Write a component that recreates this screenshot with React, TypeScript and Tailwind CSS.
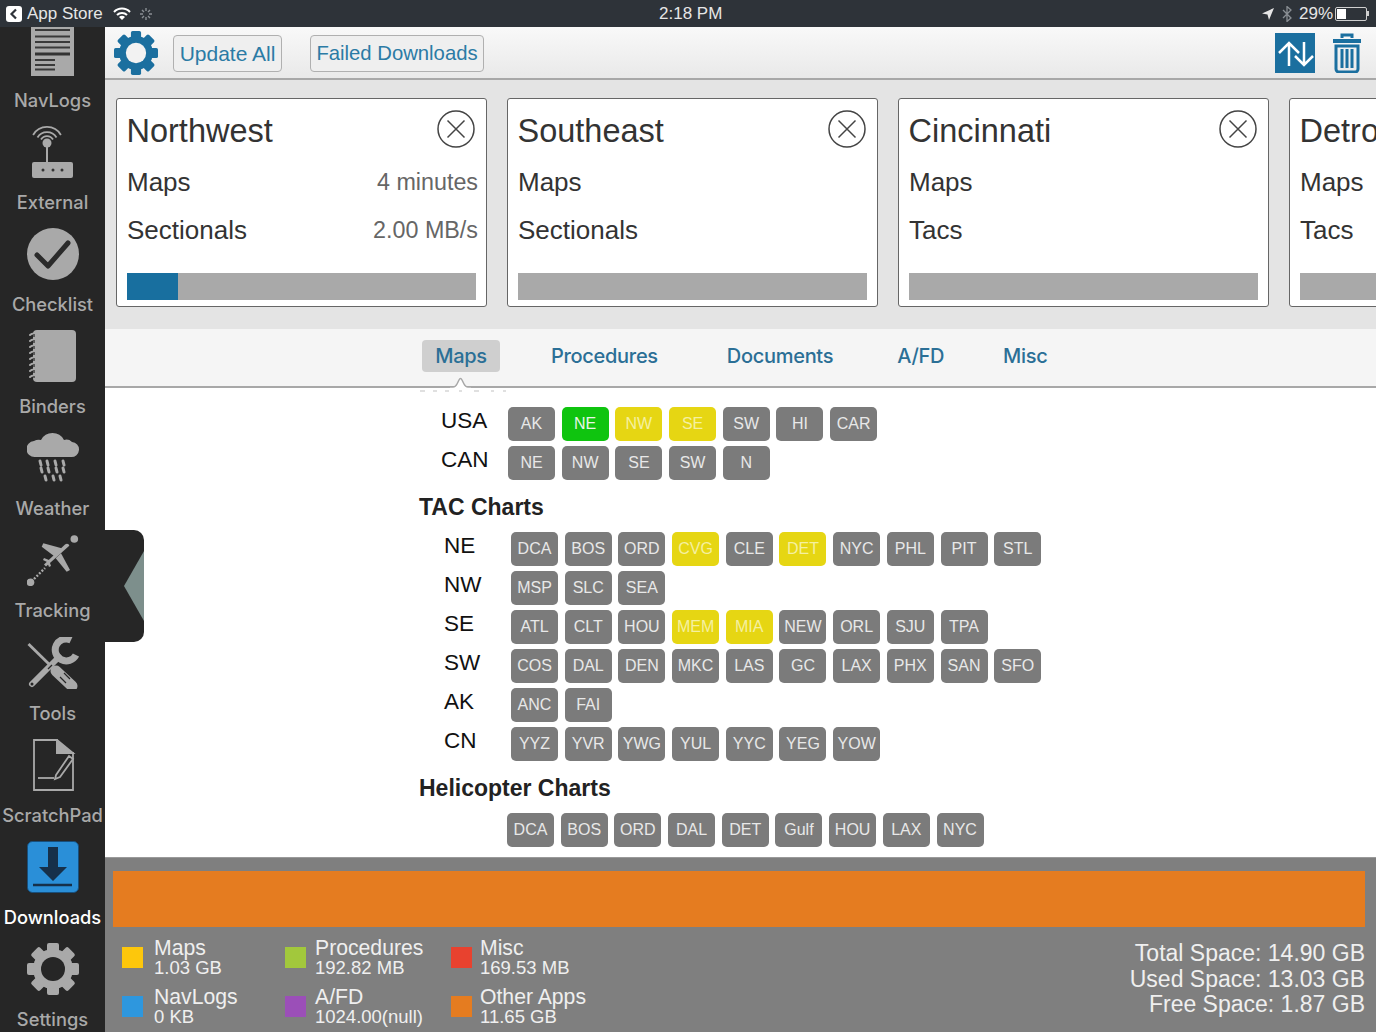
import type { ReactNode } from 'react';

const GREY = '#a9a9a9';
const BLUE = '#1b6f9f';

const navItems: { label: string; icon: ReactNode; active?: boolean }[] = [
  {
    label: 'NavLogs',
    icon: (
      <svg width="52" height="52" viewBox="0 0 52 52">
        <rect x="4" y="0" width="43" height="52" fill={GREY} />
        <path d="M8 6h35M8 12.500h35M8 18h35M8 23.500h35" stroke="#3a3a3a" strokeWidth="2" />
        <path d="M8 30h35" stroke="#333" strokeWidth="3" />
        <path d="M8 36h20M8 41h20M8 45.500h20" stroke="#3a3a3a" strokeWidth="1.800" />
      </svg>
    ),
  },
  {
    label: 'External',
    icon: (
      <svg width="52" height="52" viewBox="0 0 52 52" fill="none" stroke={GREY}>
        <path d="M6.100 9A16 16 0 0 1 33.900 9M10.500 11.500A11 11 0 0 1 29.500 11.500M14 13.500A7 7 0 0 1 26 13.500" strokeWidth="1.800" />
        <circle cx="20" cy="17" r="4.500" fill={GREY} stroke="none" />
        <path d="M20 20v17" strokeWidth="2" />
        <rect x="5" y="36" width="41" height="16" rx="2" fill={GREY} stroke="none" />
        <circle cx="16" cy="44" r="1.500" fill="#333" stroke="none" />
        <circle cx="26" cy="44" r="1.500" fill="#333" stroke="none" />
        <circle cx="35" cy="44" r="1.500" fill="#333" stroke="none" />
      </svg>
    ),
  },
  {
    label: 'Checklist',
    icon: (
      <svg width="52" height="52" viewBox="0 0 52 52" fill="none">
        <circle cx="26" cy="26" r="26" fill={GREY} />
        <path d="M10 27l11 11 20-23" stroke="#2b2b2b" strokeWidth="5" strokeLinecap="round" strokeLinejoin="round" />
      </svg>
    ),
  },
  {
    label: 'Binders',
    icon: (
      <svg width="52" height="52" viewBox="0 0 52 52" fill="none">
        <rect x="6" y="0" width="43" height="52" rx="4" fill={GREY} />
        <path
          d="M3 5c2-2 6-2 8 0M3 11c2-2 6-2 8 0M3 17c2-2 6-2 8 0M3 23c2-2 6-2 8 0M3 29c2-2 6-2 8 0M3 35c2-2 6-2 8 0M3 41c2-2 6-2 8 0M3 47c2-2 6-2 8 0"
          stroke={GREY}
          strokeWidth="2"
          strokeLinecap="round"
        />
        <path d="M7 4v44" stroke="#262626" strokeWidth="1.200" strokeDasharray="3 3" />
      </svg>
    ),
  },
  {
    label: 'Weather',
    icon: (
      <svg width="52" height="52" viewBox="0 0 52 52" fill="none">
        <path d="M8 25a8 8 0 0 1-1-16 9 9 0 0 1 7-1 13 13 0 0 1 23 0 8 8 0 0 1 8 2 7.500 7.500 0 0 1-1 15z" fill={GREY} />
        <path
          d="M13 29l1 4M20 29l1 4M28 29l1 4M36 29l1 4M14 36l1 4M21 36l1 4M29 36l1 4M36 36l1 4M18 44l1 4M26 44l1 4M33 44l1 4"
          stroke={GREY}
          strokeWidth="3"
          strokeLinecap="round"
        />
      </svg>
    ),
  },
  {
    label: 'Tracking',
    icon: (
      <svg width="52" height="52" viewBox="0 0 52 52" fill="none">
        <circle cx="47.300" cy="5" r="3.800" fill={GREY} />
        <circle cx="3.500" cy="48.300" r="3.800" fill={GREY} />
        <path d="M7 45l11-11" stroke={GREY} strokeWidth="2.400" strokeDasharray="2 1.600" />
        <path d="M42.300 11.700L19 32.500l-2-2 21-20c2-1.500 4-.5 4.300 1.200z" fill={GREY} />
        <path d="M34.700 14.300L16.300 9.300l-1.600 3.400L28 22.700z" fill={GREY} />
        <path d="M34 19.300L43 36l-3.300 1.700L28.700 24.300z" fill={GREY} />
        <path d="M16 26l4 2 2 5 2-1-2-6-5-2z" fill={GREY} />
      </svg>
    ),
  },
  {
    label: 'Tools',
    icon: (
      <svg width="52" height="52" viewBox="0 0 52 52" fill="none">
        <path d="M1.500 7L28 33" stroke={GREY} strokeWidth="2.800" />
        <path d="M44 3A11 11 0 1 0 49 18" stroke={GREY} strokeWidth="7" />
        <path d="M32 20L5 47" stroke={GREY} strokeWidth="6" strokeLinecap="round" />
        <circle cx="5" cy="47" r="1.500" fill="#262626" />
        <path d="M29 34l16 15" stroke={GREY} strokeWidth="11" strokeLinecap="round" />
        <path d="M33 40l6 6M37 36l6 6" stroke="#262626" strokeWidth="1.200" />
        <path d="M25 28l-4 4" stroke="#262626" strokeWidth="1.200" />
      </svg>
    ),
  },
  {
    label: 'ScratchPad',
    icon: (
      <svg width="52" height="52" viewBox="0 0 52 52" fill="none" stroke={GREY} strokeWidth="1.800">
        <path d="M7 1h23v13h16v37H7z" />
        <path d="M30 1l16 13H30z" fill={GREY} />
        <path d="M11 39h16" />
        <path d="M29 36l13-19 4 3-13 18-5 2z" />
      </svg>
    ),
  },
  {
    label: 'Downloads',
    active: true,
    icon: (
      <svg width="52" height="52" viewBox="0 0 52 52" fill="none">
        <rect x="0.500" y="0.500" width="51" height="51" rx="5" fill="#2a8fd8" stroke="#184f7c" />
        <path d="M21 6h10v20h9L26 40 12 26h9z" fill="#16304a" />
        <path d="M6 44h39" stroke="#16304a" strokeWidth="2.500" />
      </svg>
    ),
  },
  {
    label: 'Settings',
    icon: <Gear size={52} color={GREY} hole="#262626" />,
  },
];

function Gear({ size, color, hole }: { size: number; color: string; hole: string }) {
  const teeth = [0, 45, 90, 135, 180, 225, 270, 315];
  return (
    <svg width={size} height={size} viewBox="0 0 52 52">
      {teeth.map(a => (
        <rect key={a} x="20" y="0" width="12" height="14" rx="2" fill={color} transform={`rotate(${a} 26 26)`} />
      ))}
      <circle cx="26" cy="26" r="20" fill={color} />
      <circle cx="26" cy="26" r="12" fill={hole} />
    </svg>
  );
}

function Sidebar() {
  return (
    <div className="w-[105px] shrink-0 -mt-[5px] bg-[#262626] flex flex-col overflow-hidden">
      {navItems.map(item => (
        <div key={item.label} className="h-[102.100px] shrink-0 flex flex-col items-center pt-[2px]">
          {item.icon}
          <span
            className={`mt-[13px] text-[18.300px] leading-[23px] font-medium whitespace-nowrap font-['Inter',sans-serif] ${
              item.active ? 'text-white' : 'text-[#a9a9a9]'
            }`}
          >
            {item.label}
          </span>
        </div>
      ))}
    </div>
  );
}

function StatusBar() {
  return (
    <div className="h-[27px] shrink-0 relative z-10 bg-[#2e3339] text-[#e6e6e6] text-[17px] flex items-center pl-[6px] pr-[7px]">
      <span className="w-[16px] h-[16px] rounded-[3px] bg-white flex items-center justify-center">
        <svg width="10" height="12" viewBox="0 0 10 12" fill="none">
          <path d="M7 1.500L2.500 6 7 10.500" stroke="#2e3339" strokeWidth="2.200" />
        </svg>
      </span>
      <span className="ml-[5px]">App Store</span>
      <svg className="ml-[10px]" width="18" height="14" viewBox="0 0 18 14" fill="none" stroke="#fff" strokeWidth="2">
        <path d="M1 5a11 11 0 0 1 16 0M4 8a7 7 0 0 1 10 0" />
        <path d="M9 13l-3-3a4 4 0 0 1 6 0z" fill="#fff" stroke="none" />
      </svg>
      <svg className="ml-[8px]" width="14" height="14" viewBox="0 0 14 14" stroke="#8a8f94" strokeWidth="1.400">
        <path d="M7 1v3M7 10v3M1 7h3M10 7h3M3 3l2 2M9 9l2 2M3 11l2-2M9 5l2-2" />
      </svg>
      <span className="absolute left-[659px]">2:18 PM</span>
      <div className="ml-auto flex items-center">
        <svg width="12" height="12" viewBox="0 0 12 12">
          <path d="M12 0L0 5.500l5.500 1L7 12z" fill="#e6e6e6" />
        </svg>
        <svg className="ml-[8px]" width="10" height="16" viewBox="0 0 10 16" fill="none" stroke="#8a8f94" strokeWidth="1.300">
          <path d="M1 4l8 8-4 3.500V.5l4 3.500-8 8" />
        </svg>
        <span className="ml-[7px]">29%</span>
        <span className="ml-[2px] w-[32px] h-[14px] border border-[#cfcfcf] rounded-[2px] p-[1px] flex">
          <span className="w-[9px] bg-white" />
        </span>
        <span className="w-[2px] h-[5px] bg-[#cfcfcf]" />
      </div>
    </div>
  );
}

function Toolbar() {
  const btn =
    'h-[37px] mt-[2px] border border-[#b0b0b0] rounded-[4px] bg-[#efefef] text-[#2b7ba5] flex items-center justify-center whitespace-nowrap';
  return (
    <div className="h-[53px] shrink-0 bg-gradient-to-b from-[#f9f9f9] to-[#e9e9e9] border-b-2 border-[#a8a8a8] flex items-center pl-[9px] pr-[15px]">
      <Gear size={44} color={BLUE} hole="#f2f2f2" />
      <div className={`ml-[15px] w-[109px] text-[21px] ${btn}`}>Update All</div>
      <div className={`ml-[28px] w-[174px] text-[20.300px] ${btn}`}>Failed Downloads</div>
      <div className="ml-auto w-[40px] h-[40px] bg-[#1b6f9f]">
        <svg width="40" height="40" viewBox="0 0 40 40" fill="none" stroke="#fff" strokeWidth="2.500">
          <path d="M14 33V10M4 20l10-10 10 10M29 9v23M20 23l9 9 9-9" />
        </svg>
      </div>
      <svg className="ml-[18px]" width="28" height="40" viewBox="0 0 28 40" fill="none" stroke={BLUE}>
        <path d="M0 8h28" strokeWidth="4" />
        <path d="M9 5V2h10v3" strokeWidth="3" />
        <path d="M3 13v23a3 3 0 0 0 3 3h16a3 3 0 0 0 3-3V13z" strokeWidth="3" />
        <path d="M9 16v19M14 16v19M19 16v19" strokeWidth="3" />
      </svg>
    </div>
  );
}

const cards = [
  { title: 'Northwest', a: 'Maps', b: 'Sectionals', time: '4 minutes', speed: '2.00 MB/s', fill: true },
  { title: 'Southeast', a: 'Maps', b: 'Sectionals' },
  { title: 'Cincinnati', a: 'Maps', b: 'Tacs' },
  { title: 'Detroit', a: 'Maps', b: 'Tacs' },
];

function DownloadCard({ c }: { c: (typeof cards)[number] }) {
  return (
    <div className="w-[371px] h-[209px] shrink-0 bg-white border border-[#666] rounded-[3px] pl-[10px] pr-[8px] pt-[13px] flex flex-col text-[#333]">
      <div className="flex items-start justify-between pr-[3px]">
        <span className="text-[32.500px] leading-[38px] -ml-[0.500px]">{c.title}</span>
        <svg className="-mt-[2px]" width="38" height="38" viewBox="0 0 38 38" fill="none" stroke="#444" strokeWidth="1.500">
          <circle cx="19" cy="19" r="18" />
          <path d="M10.500 10.500l17 17M27.500 10.500l-17 17" />
        </svg>
      </div>
      <div className="mt-[17px] flex justify-between items-center text-[26px] leading-[30px]">
        <span>{c.a}</span>
        <span className="text-[23.300px] text-[#666]">{c.time}</span>
      </div>
      <div className="mt-[18px] flex justify-between items-center text-[26px] leading-[30px]">
        <span>{c.b}</span>
        <span className="text-[23.300px] text-[#666]">{c.speed}</span>
      </div>
      <div className="mt-[28px] w-[349px] h-[27px] bg-[#a9a9a9]">
        {c.fill && <div className="w-[51px] h-full bg-[#186f9f]" />}
      </div>
    </div>
  );
}

function Tabs() {
  const tab = "text-[20px] font-medium text-[#2b6f96] font-['Inter',sans-serif] tracking-[-0.3px]";
  return (
    <div className="h-[59px] shrink-0 relative bg-[#f5f5f5] border-b-2 border-[#a8a8a8] flex items-center pl-[317px] pb-[4px]">
      <div className={`w-[78px] h-[32px] rounded-[4px] bg-[#cfcfcf] flex items-center justify-center ${tab}`}>Maps</div>
      <div className={`ml-[51px] ${tab}`}>Procedures</div>
      <div className={`ml-[69px] ${tab}`}>Documents</div>
      <div className={`ml-[64px] ${tab}`}>A/FD</div>
      <div className={`ml-[59px] ${tab}`}>Misc</div>
      <svg className="absolute left-[345px] -bottom-[2px]" width="21" height="11" viewBox="0 0 21 11">
        <path d="M0 10h3c2 0 3-1 4-3l2-4c1-2 2-2 3 0l2 4c1 2 2 3 4 3h3v1H0z" fill="#fff" />
        <path d="M0 10h3c2 0 3-1 4-3l2-4c1-2 2-2 3 0l2 4c1 2 2 3 4 3h3" fill="none" stroke="#a8a8a8" strokeWidth="1.500" />
      </svg>
    </div>
  );
}

type Chip = string | { t: string; c: 'g' | 'y' };

function ChipRow({ label, chips, labelW, left }: { label?: string; chips: Chip[]; labelW: string; left: string }) {
  return (
    <div className={`h-[35px] flex items-center ${left}`}>
      {label && <span className={`${labelW} text-[22.500px] text-[#111] -mt-[5px]`}>{label}</span>}
      <div className="flex gap-[6.700px]">
        {chips.map((chip, i) => {
          const text = typeof chip === 'string' ? chip : chip.t;
          const state = typeof chip === 'string' ? '' : chip.c;
          return (
            <div
              key={i}
              className={`w-[47px] h-[34px] rounded-[5px] flex items-center justify-center text-[16px] ${
                state === 'g'
                  ? 'bg-[#0fc40f] text-[#e8f5e8]'
                  : state === 'y'
                    ? 'bg-[#e6d613] text-[#f5f0a0]'
                    : 'bg-[#7b7b7b] text-[#e8e8e8]'
              }`}
            >
              {text}
            </div>
          );
        })}
      </div>
    </div>
  );
}

function ChartsList() {
  const y = (t: string): Chip => ({ t, c: 'y' });
  const tac: [string, Chip[]][] = [
    ['NE', ['DCA', 'BOS', 'ORD', y('CVG'), 'CLE', y('DET'), 'NYC', 'PHL', 'PIT', 'STL']],
    ['NW', ['MSP', 'SLC', 'SEA']],
    ['SE', ['ATL', 'CLT', 'HOU', y('MEM'), y('MIA'), 'NEW', 'ORL', 'SJU', 'TPA']],
    ['SW', ['COS', 'DAL', 'DEN', 'MKC', 'LAS', 'GC', 'LAX', 'PHX', 'SAN', 'SFO']],
    ['AK', ['ANC', 'FAI']],
    ['CN', ['YYZ', 'YVR', 'YWG', 'YUL', 'YYC', 'YEG', 'YOW']],
  ];
  return (
    <div className="flex-1 min-h-0 relative bg-white pl-[314px] pt-[18px] flex flex-col">
      {/* bottom edge of a heading scrolled under the tab bar */}
      <svg className="absolute left-[314px] top-[1px]" width="90" height="4" viewBox="0 0 90 4" stroke="#d6d6d6" strokeWidth="1.500">
        <path d="M1 2h5M14 2h4M26 2h4M40 2h3M55 2h5M72 2h3M84 2h3" />
      </svg>
      <div className="flex flex-col gap-[4px]">
        <ChipRow label="USA" labelW="w-[67px]" left="pl-[22px]" chips={['AK', { t: 'NE', c: 'g' }, y('NW'), y('SE'), 'SW', 'HI', 'CAR']} />
        <ChipRow label="CAN" labelW="w-[67px]" left="pl-[22px]" chips={['NE', 'NW', 'SE', 'SW', 'N']} />
      </div>
      <h3 className="mt-[12px] h-[30px] text-[23px] leading-[30px] font-bold text-[#222]">TAC Charts</h3>
      <div className="mt-[9px] flex flex-col gap-[4px]">
        {tac.map(([label, chips]) => (
          <ChipRow key={label} label={label} labelW="w-[67px]" left="pl-[25px]" chips={chips} />
        ))}
      </div>
      <h3 className="mt-[12px] h-[30px] text-[23px] leading-[30px] font-bold text-[#222]">Helicopter Charts</h3>
      <div className="mt-[9px]">
        <ChipRow labelW="" left="pl-[88px]" chips={['DCA', 'BOS', 'ORD', 'DAL', 'DET', 'Gulf', 'HOU', 'LAX', 'NYC']} />
      </div>
    </div>
  );
}

const legend = [
  {
    w: 'w-[163px]',
    gap: 'ml-[11px]',
    rows: [
      { name: 'Maps', val: '1.03 GB', color: 'bg-[#fdc70c]' },
      { name: 'NavLogs', val: '0 KB', color: 'bg-[#2e97de]' },
    ],
  },
  {
    w: 'w-[166px]',
    gap: 'ml-[9px]',
    rows: [
      { name: 'Procedures', val: '192.82 MB', color: 'bg-[#a2c83c]' },
      { name: 'A/FD', val: '1024.00(null)', color: 'bg-[#9b4fb8]' },
    ],
  },
  {
    w: 'w-[200px]',
    gap: 'ml-[8px]',
    rows: [
      { name: 'Misc', val: '169.53 MB', color: 'bg-[#e8422f]' },
      { name: 'Other Apps', val: '11.65 GB', color: 'bg-[#e57c20]' },
    ],
  },
];

function StoragePanel() {
  return (
    <div className="h-[175px] shrink-0 bg-[#7f7f7f] border-t border-[#9a9a9a] pt-[13px] pl-[8px] pr-[11px] text-[#efefef]">
      <div className="h-[56px] bg-[#e57c20]" />
      <div className="mt-[10px] flex">
        <div className="flex pl-[9px]">
          {legend.map((col, i) => (
            <div key={i} className={`${col.w} flex flex-col gap-[9px]`}>
              {col.rows.map(item => (
                <div key={item.name} className="flex items-center h-[40px]">
                  <span className={`w-[21px] h-[21px] shrink-0 ${item.color}`} />
                  <div className={`${col.gap} flex flex-col whitespace-nowrap`}>
                    <span className="text-[21.200px] leading-[20px]">{item.name}</span>
                    <span className="text-[18.500px] leading-[19px]">{item.val}</span>
                  </div>
                </div>
              ))}
            </div>
          ))}
        </div>
        <div className="ml-auto text-right text-[23px] leading-[25.500px] pt-[4px]">
          <div>Total Space: 14.90 GB</div>
          <div>Used Space: 13.03 GB</div>
          <div>Free Space: 1.87 GB</div>
        </div>
      </div>
    </div>
  );
}

export default function App() {
  return (
    <div className="w-[1376px] h-[1032px] relative overflow-hidden flex flex-col font-['Liberation_Sans',sans-serif]">
      <StatusBar />
      <div className="flex-1 min-h-0 flex">
        <Sidebar />
        <div className="flex-1 min-w-0 flex flex-col">
          <Toolbar />
          <div className="h-[249px] shrink-0 bg-[#e4e4e4] pl-[11px] pt-[18px] flex gap-[20px] overflow-hidden">
            {cards.map(c => (
              <DownloadCard key={c.title} c={c} />
            ))}
          </div>
          <Tabs />
          <ChartsList />
          <StoragePanel />
        </div>
      </div>
      {/* popover handle over the sidebar edge */}
      <svg className="absolute left-[105px] top-[530px]" width="39" height="112" viewBox="0 0 39 112">
        <path d="M0 0h29a10 10 0 0 1 10 10v92a10 10 0 0 1-10 10H0z" fill="#262626" />
        <path d="M19 56L39 21v70z" fill="#7d8f8c" />
      </svg>
    </div>
  );
}
